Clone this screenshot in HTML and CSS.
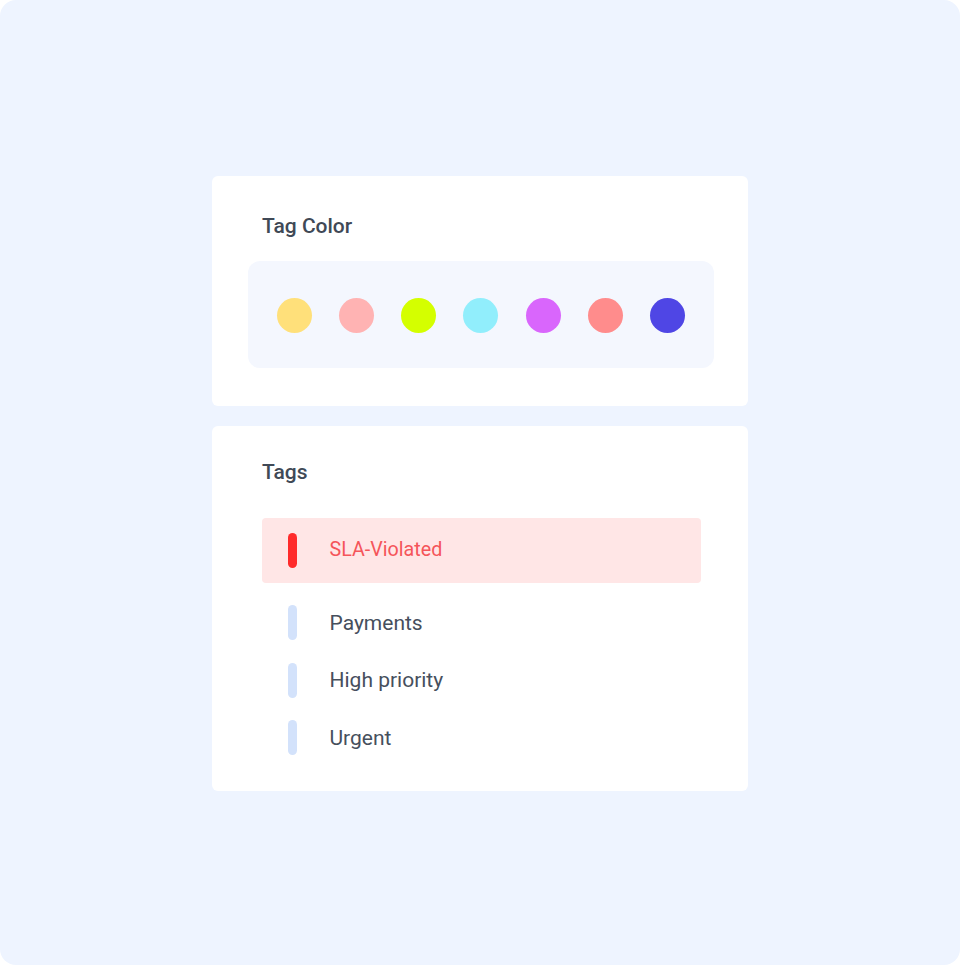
FILE: index.html
```html
<!DOCTYPE html>
<html lang="en">
<head>
<meta charset="utf-8">
<title>Tags</title>
<link rel="stylesheet" href="styles.css">
</head>
<body>
<div class="stage">
  <section class="card card-color">
    <h2 class="card-title">Tag Color</h2>
    <div class="palette">
      <span class="swatch swatch-yellow"></span>
      <span class="swatch swatch-pink"></span>
      <span class="swatch swatch-lime"></span>
      <span class="swatch swatch-cyan"></span>
      <span class="swatch swatch-purple"></span>
      <span class="swatch swatch-salmon"></span>
      <span class="swatch swatch-indigo"></span>
    </div>
  </section>
  <section class="card card-tags">
    <h2 class="card-title">Tags</h2>
    <ul class="tag-list">
      <li class="tag tag-active"><span class="tag-bar"></span><span class="tag-name">SLA-Violated</span></li>
      <li class="tag"><span class="tag-bar"></span><span class="tag-name">Payments</span></li>
      <li class="tag"><span class="tag-bar"></span><span class="tag-name">High priority</span></li>
      <li class="tag"><span class="tag-bar"></span><span class="tag-name">Urgent</span></li>
    </ul>
  </section>
</div>
</body>
</html>
```
FILE: styles.css
```css
* { box-sizing: border-box; }
html, body { margin: 0; padding: 0; background: #ffffff; }
body { font-family: Roboto, "Liberation Sans", sans-serif; }

.stage {
  width: 960px;
  height: 965px;
  background: #eef4ff;
  border-radius: 16px;
  display: flex;
  flex-direction: column;
  align-items: center;
  padding-top: 176px;
  gap: 20px;
}

.card {
  width: 536px;
  background: #ffffff;
  border-radius: 6px;
}

.card-title {
  margin: 0;
  font-size: 21px;
  line-height: 24px;
  font-weight: 500;
  color: #404956;
}

.card-color {
  height: 230px;
  padding: 38px 34px 0 36px;
}
.card-color .card-title { padding-left: 14px; }

.palette {
  margin-top: 23px;
  height: 107px;
  background: #f4f7fe;
  border-radius: 12px;
  display: flex;
  align-items: center;
  justify-content: space-between;
  padding: 1px 29px 0;
}

.swatch {
  width: 35px;
  height: 35px;
  border-radius: 50%;
}
.swatch-yellow { background: #ffe07a; }
.swatch-pink { background: #ffb3b3; }
.swatch-lime { background: #d4ff00; }
.swatch-cyan { background: #91eefc; }
.swatch-purple { background: #d966fc; }
.swatch-salmon { background: #ff8c8c; }
.swatch-indigo { background: #4f46e5; }

.card-tags {
  height: 365px;
  padding: 34px 47px 0 50px;
}

.tag-list {
  list-style: none;
  margin: 33.5px 0 0;
  padding: 0;
  display: flex;
  flex-direction: column;
  gap: 22.5px;
}

.tag {
  display: flex;
  align-items: center;
  height: 35px;
  padding-left: 26px;
}

.tag-active {
  height: 65px;
  background: #ffe6e6;
  border-radius: 4px;
}

.tag-bar {
  width: 9px;
  height: 35px;
  border-radius: 5px;
  background: #d3e2fb;
  flex: none;
}
.tag-active .tag-bar { background: #ff2b2b; }

.tag-name {
  margin-left: 32.5px;
  font-size: 21px;
  line-height: 24px;
  color: #464f5d;
}
.tag-active .tag-name {
  font-size: 19.7px;
  color: #f5555a;
}
```
